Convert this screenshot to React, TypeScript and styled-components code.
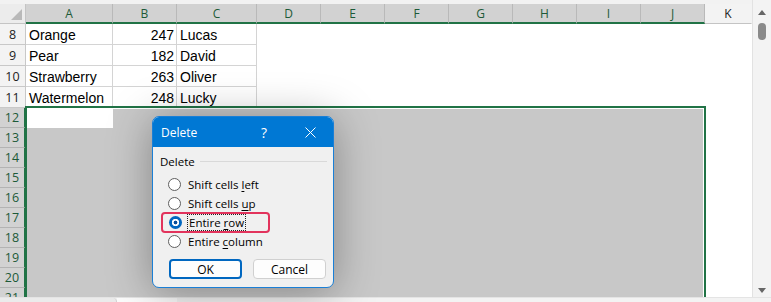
import * as React from "react";
import styled, { createGlobalStyle } from "styled-components";

const GREEN = "#217346";

const GlobalStyle = createGlobalStyle`
  html, body {
    margin: 0;
    padding: 0;
    background: #fff;
    overflow: hidden;
  }
`;

const Window = styled.div`
  position: relative;
  width: 771px;
  height: 302px;
  overflow: hidden;
  display: grid;
  grid-template-columns: 752px 19px;
  grid-template-rows: 297px 5px;
  background: #fff;
`;

const Sheet = styled.div`
  position: relative;
  overflow: hidden;
  display: flex;
  flex-direction: column;
  background: #fff;
`;

const TopStrip = styled.div`
  flex: none;
  height: 4px;
  background: #f2f2f2;
`;

const Grid = styled.div`
  display: grid;
  grid-template-columns: 26px 87px 64px 80px repeat(7, 64px) 47px;
  grid-template-rows: 20px repeat(4, 21px) repeat(10, 20px);
  font-family: "Liberation Sans", Arial, sans-serif;
  font-size: 14px;
  color: #000;
`;

const Corner = styled.div`
  position: relative;
  box-sizing: border-box;
  background: #ececec;
  border-right: 1px solid #c4c4c4;
  border-bottom: 1px solid #c4c4c4;
  &::after {
    content: "";
    position: absolute;
    right: 3px;
    bottom: 3px;
    border-left: 11px solid transparent;
    border-bottom: 11px solid #b9b9b9;
  }
`;

const ColHeader = styled.div<{ $sel: boolean }>`
  box-sizing: border-box;
  display: flex;
  align-items: center;
  justify-content: center;
  font-family: "Open Sans", "Noto Sans", sans-serif;
  font-size: 12px;
  color: ${(p) => (p.$sel ? "#1d5a38" : "#222")};
  background: ${(p) => (p.$sel ? "#d2d2d2" : "#f3f3f3")};
  border-right: 1px solid ${(p) => (p.$sel ? "#b9b9b9" : "#f3f3f3")};
  border-bottom: ${(p) => (p.$sel ? `2px solid ${GREEN}` : "1px solid #c4c4c4")};
  padding-top: ${(p) => (p.$sel ? "1px" : "0")};
`;

const RowHeader = styled.div<{ $sel: boolean }>`
  box-sizing: border-box;
  display: flex;
  align-items: center;
  justify-content: center;
  font-family: "Open Sans", "Noto Sans", sans-serif;
  font-size: 12.5px;
  color: ${(p) => (p.$sel ? "#1d5a38" : "#222")};
  background: ${(p) => (p.$sel ? "#d2d2d2" : "#f3f3f3")};
  border-bottom: 1px solid ${(p) => (p.$sel ? "#b3b3b3" : "#c8c8c8")};
  border-right: ${(p) => (p.$sel ? `2px solid ${GREEN}` : "1px solid #c8c8c8")};
`;

const Cell = styled.div<{ $lined?: boolean; $shade?: boolean; $right?: boolean }>`
  box-sizing: border-box;
  display: flex;
  align-items: center;
  justify-content: ${(p) => (p.$right ? "flex-end" : "flex-start")};
  padding: 1px ${(p) => (p.$right ? "2px" : "0")} 0 3px;
  white-space: nowrap;
  overflow: hidden;
  background: ${(p) => (p.$shade ? "#c8c8c8" : "#fff")};
  border-right: 1px solid ${(p) => (p.$lined ? "#d4d4d4" : "transparent")};
  border-bottom: 1px solid ${(p) => (p.$lined ? "#d4d4d4" : "transparent")};
`;

const SelectionFrame = styled.div`
  position: absolute;
  left: 25px;
  top: 106px;
  width: 681px;
  height: 220px;
  box-sizing: border-box;
  border: 2px solid ${GREEN};
  box-shadow: inset -1px 1px 0 #fff;
  pointer-events: none;
`;

const ScrollBar = styled.div`
  grid-column: 2;
  grid-row: 1;
  box-sizing: border-box;
  background: #f3f3f3;
  border-left: 1px solid #e2e2e2;
  display: flex;
  flex-direction: column;
  align-items: center;
  padding: 10px 0 4px;
`;

const Arrow = styled.div<{ $down?: boolean }>`
  width: 0;
  height: 0;
  border-left: 4.5px solid transparent;
  border-right: 4.5px solid transparent;
  ${(p) =>
    p.$down
      ? "border-top: 5px solid #666; margin-top: auto;"
      : "border-bottom: 5px solid #666;"}
`;

const Thumb = styled.div`
  width: 8px;
  height: 17px;
  margin-top: 8px;
  border-radius: 4px;
  background: #8a8a8a;
`;

const TabBar = styled.div`
  grid-column: 1 / span 2;
  grid-row: 2;
  display: flex;
  background: #f3f3f3;
  border-top: 1px solid #e4e4e4;
`;

const Tab = styled.div`
  width: 116px;
  background: #ebebeb;
  border-right: 1px solid #d2d2d2;
  border-top-right-radius: 5px;
`;

const TabGap = styled.div`
  width: 60px;
  background: #fcfcfc;
`;

const Dialog = styled.div`
  position: absolute;
  left: 152px;
  top: 116px;
  width: 182px;
  height: 172px;
  box-sizing: border-box;
  border: 1px solid #1a7fd6;
  border-radius: 7px;
  background: #f0f0f0;
  box-shadow: 0 4px 44px rgba(0, 0, 0, 0.34);
  overflow: hidden;
  display: flex;
  flex-direction: column;
  font-family: "Open Sans", "Noto Sans", sans-serif;
  font-size: 11.5px;
  color: #000;
`;

const TitleBar = styled.div`
  flex: none;
  height: 30px;
  display: flex;
  align-items: center;
  background: #0078d4;
  color: #fff;
  padding-left: 8px;
`;

const Title = styled.div`
  flex: 1;
  font-size: 12px;
`;

const TitleButton = styled.div`
  width: 46px;
  height: 30px;
  display: flex;
  align-items: center;
  justify-content: center;
  font-size: 14px;
`;

const Body = styled.div`
  flex: 1;
  display: flex;
  flex-direction: column;
  padding: 6px 6px 9px 7px;
`;

const GroupHeader = styled.div`
  height: 16px;
  display: flex;
  align-items: center;
  gap: 5px;
  &::after {
    content: "";
    flex: 1;
    height: 1px;
    background: #d9d9d9;
  }
`;

const RadioList = styled.div`
  margin-top: 6px;
  display: flex;
  flex-direction: column;
`;

const RadioRow = styled.div<{ $mark?: boolean }>`
  box-sizing: border-box;
  height: ${(p) => (p.$mark ? "21px" : "19px")};
  display: flex;
  align-items: center;
  gap: 7px;
  ${(p) =>
    p.$mark
      ? `
    width: 109px;
    margin: -1px 0 -1px 1px;
    padding-left: 6px;
    border: 2px solid #e2335c;
    border-radius: 4px;
  `
      : "padding-left: 8px;"}
`;

const Radio = styled.span<{ $on?: boolean }>`
  flex: none;
  width: 13px;
  height: 13px;
  box-sizing: border-box;
  border-radius: 50%;
  ${(p) =>
    p.$on
      ? "background: radial-gradient(circle, #0a4f9a 0 1.6px, #fff 2.2px 3.4px, #0067c0 4px);"
      : "background: #fff; border: 1px solid #5f5f5f;"}
`;

const RadioLabel = styled.span<{ $focus?: boolean }>`
  line-height: 15px;
  padding: 0 1px;
  margin-left: -1px;
  outline: ${(p) => (p.$focus ? "1px dotted #222" : "none")};
  u {
    text-underline-offset: 2px;
  }
`;

const Buttons = styled.div`
  margin-top: 8px;
  padding-left: 9px;
  display: flex;
  gap: 11px;
`;

const Button = styled.div<{ $primary?: boolean }>`
  box-sizing: border-box;
  width: 73px;
  height: 20px;
  display: flex;
  align-items: center;
  justify-content: center;
  background: #fdfdfd;
  border-radius: 4px;
  border: ${(p) => (p.$primary ? "2px solid #0067c0" : "1px solid #d0d0d0")};
  font-size: 12px;
`;

const columns = ["A", "B", "C", "D", "E", "F", "G", "H", "I", "J", "K"];

const data = [
  { n: 8, a: "Orange", b: 247, c: "Lucas" },
  { n: 9, a: "Pear", b: 182, c: "David" },
  { n: 10, a: "Strawberry", b: 263, c: "Oliver" },
  { n: 11, a: "Watermelon", b: 248, c: "Lucky" },
];

const emptyRows = [12, 13, 14, 15, 16, 17, 18, 19, 20, 21];

function CloseIcon() {
  return (
    <svg width="11" height="11" viewBox="0 0 11 11">
      <path d="M0.5 0.5 L10.5 10.5 M10.5 0.5 L0.5 10.5" stroke="#fff" strokeWidth="1" />
    </svg>
  );
}

export default function App(): JSX.Element {
  return (
    <Window>
      <GlobalStyle />
      <Sheet>
        <TopStrip />
        <Grid>
          <Corner />
          {columns.map((c) => (
            <ColHeader key={c} $sel={c !== "K"}>
              {c}
            </ColHeader>
          ))}

          {data.map((r) => (
            <React.Fragment key={r.n}>
              <RowHeader $sel={false}>{r.n}</RowHeader>
              <Cell $lined>{r.a}</Cell>
              <Cell $lined $right>
                {r.b}
              </Cell>
              <Cell $lined>{r.c}</Cell>
              {columns.slice(3).map((c) => (
                <Cell key={c} />
              ))}
            </React.Fragment>
          ))}

          {emptyRows.map((n) => (
            <React.Fragment key={n}>
              <RowHeader $sel>{n}</RowHeader>
              {columns.map((c) => (
                <Cell key={c} $shade={c !== "K" && !(c === "A" && n === 12)} />
              ))}
            </React.Fragment>
          ))}
        </Grid>
        <SelectionFrame />
      </Sheet>

      <ScrollBar>
        <Arrow />
        <Thumb />
        <Arrow $down />
      </ScrollBar>

      <TabBar>
        <Tab />
        <TabGap />
      </TabBar>

      <Dialog>
        <TitleBar>
          <Title>Delete</Title>
          <TitleButton>?</TitleButton>
          <TitleButton>
            <CloseIcon />
          </TitleButton>
        </TitleBar>
        <Body>
          <GroupHeader>Delete</GroupHeader>
          <RadioList>
            <RadioRow>
              <Radio />
              <RadioLabel>
                Shift cells <u>l</u>eft
              </RadioLabel>
            </RadioRow>
            <RadioRow>
              <Radio />
              <RadioLabel>
                Shift cells <u>u</u>p
              </RadioLabel>
            </RadioRow>
            <RadioRow $mark>
              <Radio $on />
              <RadioLabel $focus>
                Entire <u>r</u>ow
              </RadioLabel>
            </RadioRow>
            <RadioRow>
              <Radio />
              <RadioLabel>
                Entire <u>c</u>olumn
              </RadioLabel>
            </RadioRow>
          </RadioList>
          <Buttons>
            <Button $primary>OK</Button>
            <Button>Cancel</Button>
          </Buttons>
        </Body>
      </Dialog>
    </Window>
  );
}
